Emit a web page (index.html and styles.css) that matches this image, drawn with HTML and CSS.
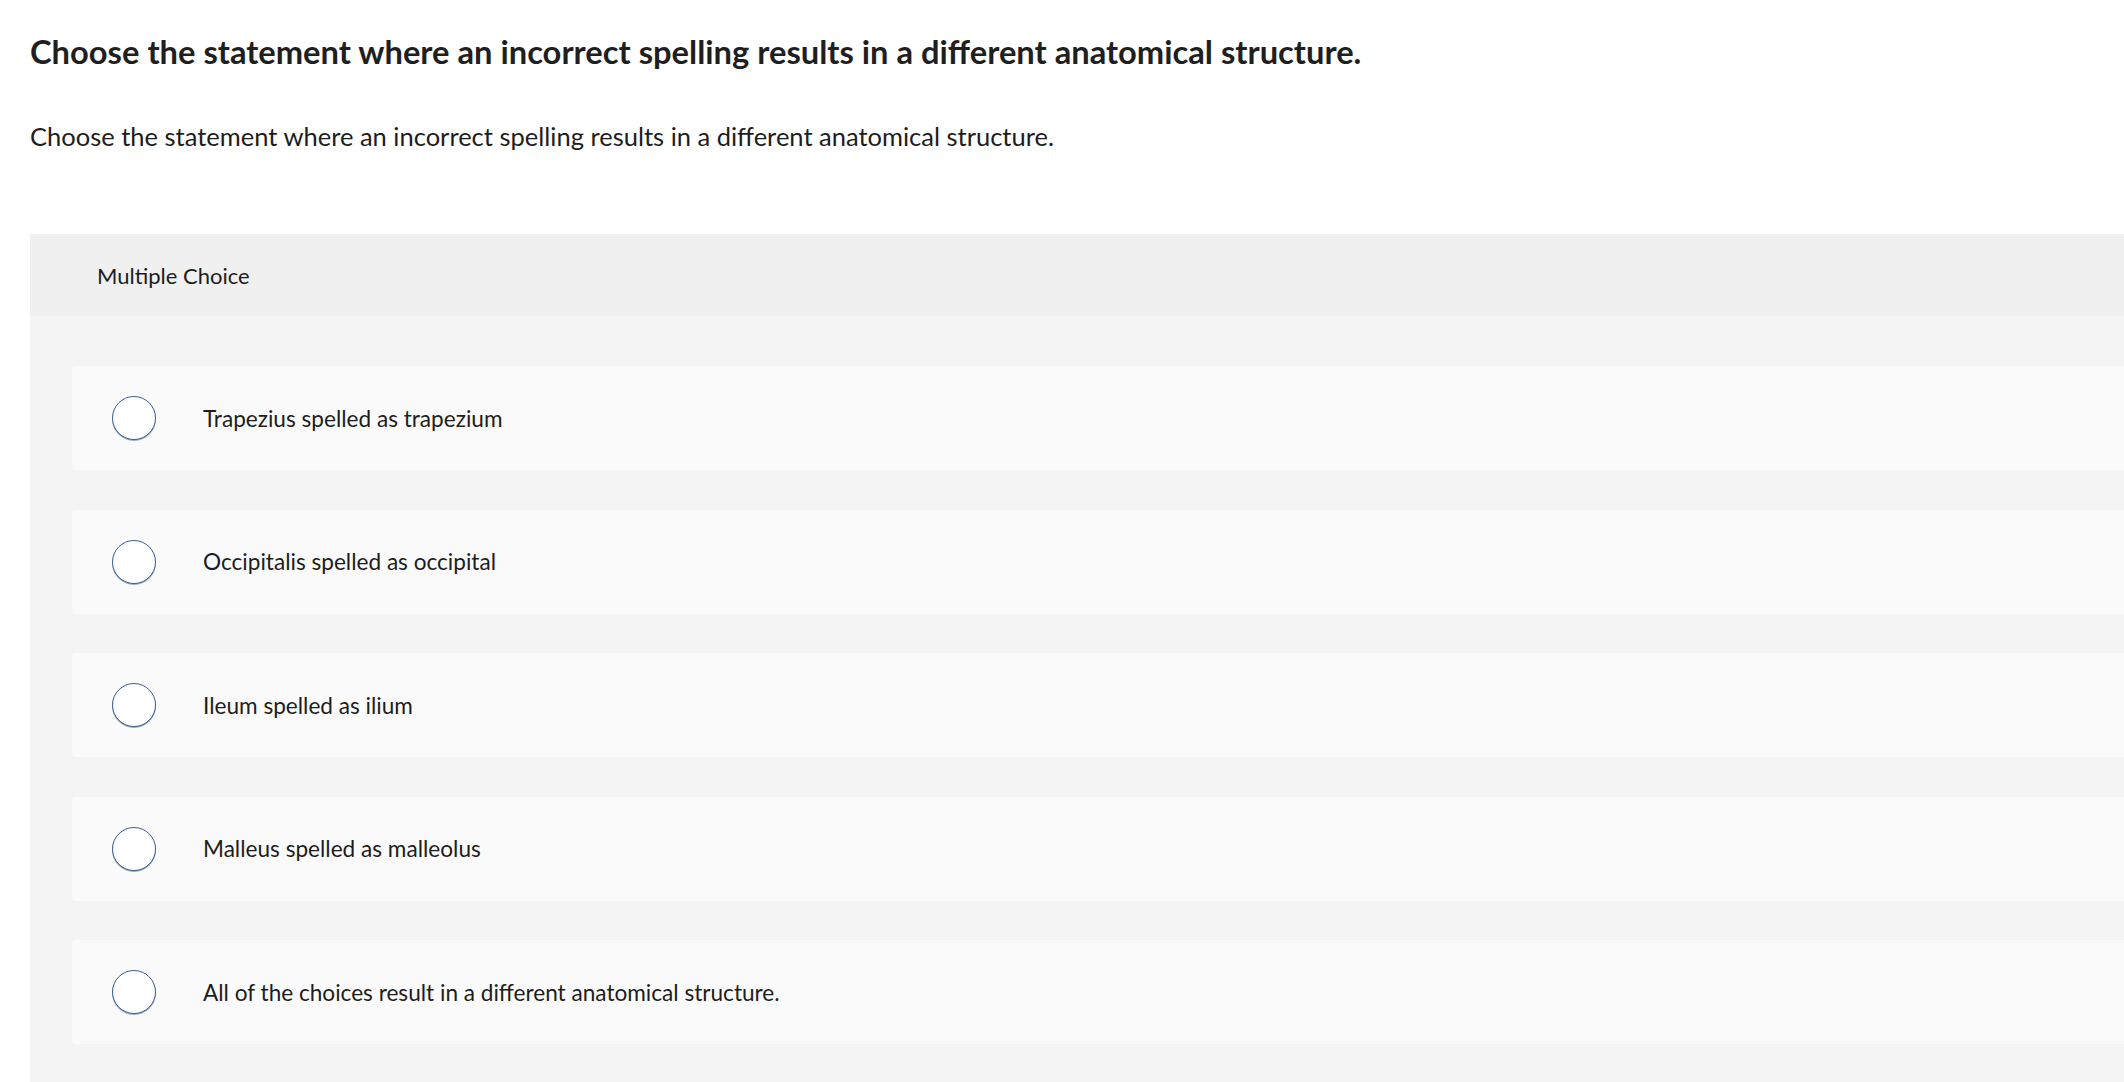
FILE: index.html
```html
<!DOCTYPE html>
<html lang="en">
<head>
<meta charset="utf-8">
<title>Multiple Choice</title>
<link rel="stylesheet" href="styles.css">
</head>
<body>
<main class="page">
  <h1 class="title">Choose the statement where an incorrect spelling results in a different anatomical structure.</h1>
  <p class="prompt">Choose the statement where an incorrect spelling results in a different anatomical structure.</p>
  <section class="panel">
    <header class="panel-head">Multiple Choice</header>
    <div class="choices">
      <label class="choice"><span class="radio"></span><span class="choice-text">Trapezius spelled as trapezium</span></label>
      <label class="choice"><span class="radio"></span><span class="choice-text">Occipitalis spelled as occipital</span></label>
      <label class="choice"><span class="radio"></span><span class="choice-text">Ileum spelled as ilium</span></label>
      <label class="choice"><span class="radio"></span><span class="choice-text">Malleus spelled as malleolus</span></label>
      <label class="choice"><span class="radio"></span><span class="choice-text">All of the choices result in a different anatomical structure.</span></label>
    </div>
  </section>
</main>
</body>
</html>
```
FILE: styles.css
```css
html, body {
  margin: 0;
  padding: 0;
  background: #ffffff;
  overflow: hidden;
}
body {
  font-family: Lato, "Open Sans", Arial, sans-serif;
  color: #1d1d1d;
}
.page {
  padding-left: 30px;
}
.title {
  margin: 0;
  padding-top: 32px;
  font-size: 32.7px;
  line-height: 40px;
  font-weight: 700;
  color: #1f1f1f;
}
.prompt {
  margin: 0;
  padding-top: 48px;
  font-size: 25.5px;
  line-height: 32px;
  font-weight: 400;
  color: #1d1d1d;
}
.panel {
  margin-top: 82px;
  background: #f4f4f4;
  height: 900px;
}
.panel-head {
  height: 82px;
  display: flex;
  align-items: center;
  padding-left: 67px;
  background: #f0f0f0;
  font-size: 22px;
  color: #1d1d1d;
}
.choices {
  display: flex;
  flex-direction: column;
  gap: 39.5px;
  padding-top: 50px;
  padding-left: 42px;
}
.choice {
  display: flex;
  align-items: center;
  height: 104px;
  padding-left: 40px;
  background: #fafafa;
  border-radius: 4px 0 0 4px;
}
.radio {
  box-sizing: border-box;
  width: 44px;
  height: 44px;
  flex: none;
  border-radius: 50%;
  border: 1.5px solid #3f5f91;
  background: #ffffff;
  box-shadow: 0 1px 0 rgba(40, 70, 120, 0.45);
}
.choice-text {
  margin-left: 47px;
  font-size: 22.6px;
  color: #1d1d1d;
}
```
